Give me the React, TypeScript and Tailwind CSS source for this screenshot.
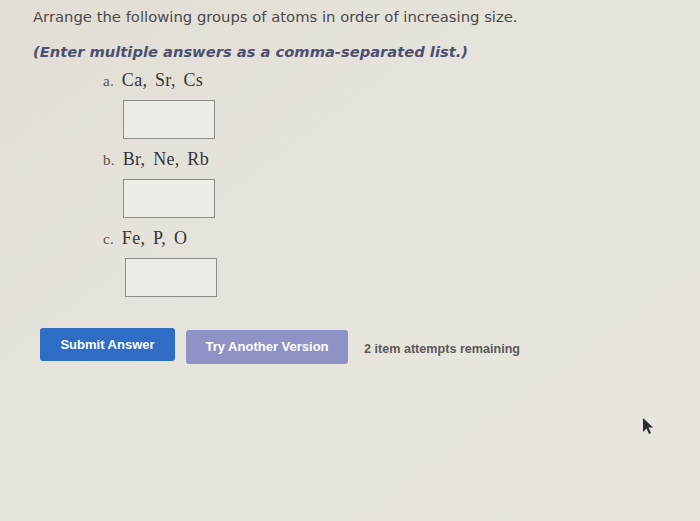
import React from 'react';

const serif = { fontFamily: '"Liberation Serif", "DejaVu Serif", serif', wordSpacing: '3px' };

function Part({ label, items, boxOffset = 0 }: { label: string; items: string; boxOffset?: number }) {
  return (
    <div className="flex flex-col">
      <div className="text-[18px] leading-[20px] text-[#353535] tracking-[0.3px]" style={serif}>
        <span className="text-[15px] text-[#555]">{label}</span> {items}
      </div>
      <div className={`mt-[9px] ${boxOffset ? 'ml-[22px]' : 'ml-[20px]'}`}>
        <input
          type="text"
          aria-label={items}
          className="block w-[92px] h-[39px] bg-[#eeece7] border border-[#8d8b88] outline-none"
        />
      </div>
    </div>
  );
}

export default function App() {
  return (
    <div
      className="relative w-[700px] h-[521px] overflow-hidden bg-gradient-to-br from-[#e2ded6] via-[#e7e4de] to-[#e9e5de]"
      style={{ fontFamily: '"DejaVu Sans", Verdana, sans-serif' }}
    >
      <div className="pt-[7px] pl-[33px]">
        <p className="text-[14.8px] leading-[20px] text-[#4a4a4a]">
          Arrange the following groups of atoms in order of increasing size.
        </p>
        <p className="mt-[15px] text-[14.7px] leading-[20px] font-bold italic text-[#4c5070]">
          (Enter multiple answers as a comma-separated list.)
        </p>

        <div className="mt-[8px] ml-[70px] flex flex-col gap-[10px]">
          <Part label="a." items="Ca, Sr, Cs" />
          <Part label="b." items="Br, Ne, Rb" />
          <Part label="c." items="Fe, P, O" boxOffset={1} />
        </div>

        <div
          className="mt-[31px] ml-[7px] flex items-start gap-[11px]"
          style={{ fontFamily: '"Liberation Sans", Arial, sans-serif' }}
        >
          <button className="w-[135px] h-[33px] rounded-[3px] bg-[#2f6cc6] text-white text-[13px] font-bold">
            Submit Answer
          </button>
          <button className="mt-[2px] w-[162px] h-[34px] rounded-[3px] bg-[#8e92c6] text-white text-[13px] font-bold">
            Try Another Version
          </button>
          <span className="ml-[5px] mt-[12px] text-[12.6px] font-bold text-[#5a5a5a]">2 item attempts remaining</span>
        </div>
      </div>

      <svg className="absolute left-[641px] top-[417px]" width="14" height="18" viewBox="0 0 14 18">
        <path d="M2 1 L2 15 L5.5 11.5 L8 17 L10 16 L7.5 10.5 L12 10.5 Z" fill="#2b2b33" />
      </svg>
    </div>
  );
}
